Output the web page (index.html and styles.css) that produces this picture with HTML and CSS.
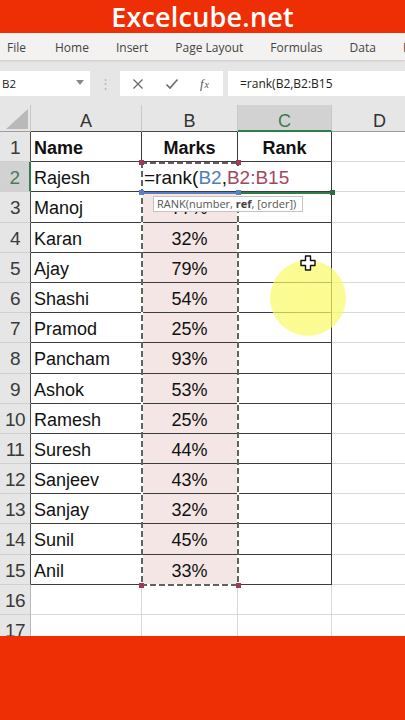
FILE: index.html
```html
<!DOCTYPE html>
<html>
<head>
<meta charset="utf-8">
<link rel="stylesheet" href="styles.css">
</head>
<body>
<div class="brand">Excelcube.net</div>
<nav class="tabs">
  <span>File</span><span>Home</span><span>Insert</span><span>Page Layout</span><span>Formulas</span><span>Data</span><span>F</span>
</nav>
<div class="fbar">
  <div class="namebox"><span>B2</span><svg class="caret" width="8" height="5" viewBox="0 0 8 5"><path d="M0 0H8L4 5Z" fill="#8a8a8a"/></svg></div>
  <span class="dots">⋮</span>
  <div class="fbtns">
    <svg width="12" height="12" viewBox="0 0 12 12"><path d="M1.5 1.5L10.5 10.5M10.5 1.5L1.5 10.5" stroke="#6a6a6a" stroke-width="1.3" fill="none"/></svg>
    <svg width="14" height="12" viewBox="0 0 14 12"><path d="M1.5 6.5L5 10L12.5 1.5" stroke="#6a6a6a" stroke-width="1.6" fill="none"/></svg>
    <span class="fx"><i>f</i><span>x</span></span>
  </div>
  <div class="formula">=rank(B2,B2:B15</div>
</div>
<div class="sheet">
  <div class="grid">
    <div class="corner"><svg width="22" height="20" viewBox="0 0 22 20"><path d="M22 0V20H0Z" fill="#b9b9b9"/></svg></div>
    <div class="ch top">A</div><div class="ch top">B</div><div class="ch sel">C</div><div class="ch">D</div>

    <div class="rh tb">1</div><div class="c t bold">Name</div><div class="c t bold ctr">Marks</div><div class="c t bold ctr">Rank</div><div class="c"></div>
    <div class="rh tb rsel">2</div><div class="c t">Rajesh</div><div class="c t edit"><span class="ftext">=rank(<span class="blue">B2</span>,<span class="red">B2:B15</span></span></div><div class="c t cact"></div><div class="c"></div>
    <div class="rh tb">3</div><div class="c t">Manoj</div><div class="c t m ctr">77%</div><div class="c t"></div><div class="c"></div>
    <div class="rh tb">4</div><div class="c t">Karan</div><div class="c t m ctr">32%</div><div class="c t"></div><div class="c"></div>
    <div class="rh tb">5</div><div class="c t">Ajay</div><div class="c t m ctr">79%</div><div class="c t"></div><div class="c"></div>
    <div class="rh tb">6</div><div class="c t">Shashi</div><div class="c t m ctr">54%</div><div class="c t"></div><div class="c"></div>
    <div class="rh tb">7</div><div class="c t">Pramod</div><div class="c t m ctr">25%</div><div class="c t"></div><div class="c"></div>
    <div class="rh tb">8</div><div class="c t">Pancham</div><div class="c t m ctr">93%</div><div class="c t"></div><div class="c"></div>
    <div class="rh tb">9</div><div class="c t">Ashok</div><div class="c t m ctr">53%</div><div class="c t"></div><div class="c"></div>
    <div class="rh tb">10</div><div class="c t">Ramesh</div><div class="c t m ctr">25%</div><div class="c t"></div><div class="c"></div>
    <div class="rh tb">11</div><div class="c t">Suresh</div><div class="c t m ctr">44%</div><div class="c t"></div><div class="c"></div>
    <div class="rh tb">12</div><div class="c t">Sanjeev</div><div class="c t m ctr">43%</div><div class="c t"></div><div class="c"></div>
    <div class="rh tb">13</div><div class="c t">Sanjay</div><div class="c t m ctr">32%</div><div class="c t"></div><div class="c"></div>
    <div class="rh tb">14</div><div class="c t">Sunil</div><div class="c t m ctr">45%</div><div class="c t"></div><div class="c"></div>
    <div class="rh tb">15</div><div class="c t">Anil</div><div class="c t m ctr">33%</div><div class="c t"></div><div class="c"></div>
    <div class="rh">16</div><div class="c"></div><div class="c"></div><div class="c"></div><div class="c"></div>
    <div class="rh">17</div><div class="c"></div><div class="c"></div><div class="c"></div><div class="c"></div>
  </div>

  <div class="ants"></div>
  <div class="bline"></div>
  <div class="gline"></div>
  <span class="hd mr hd1"></span><span class="hd mr hd2"></span><span class="hd mr hd3"></span><span class="hd mr hd4"></span>
  <span class="hd bl hd5"></span><span class="hd bl hd6"></span>
  <span class="hd gr hd7"></span>
  <div class="tip">RANK(number, <b>ref</b>, [order])</div>
  <div class="glow"></div>
  <svg class="cursor" width="16" height="16" viewBox="0 0 16 16"><path d="M5.5 1H10.5V5.5H15V10.5H10.5V15H5.5V10.5H1V5.5H5.5Z" fill="#fff" stroke="#111" stroke-width="1.4" stroke-linejoin="round"/></svg>
</div>
<div class="footer"></div>
</body>
</html>
```
FILE: styles.css
```css
* { box-sizing: border-box; }
html, body { margin: 0; padding: 0; }
body {
  width: 405px;
  height: 720px;
  overflow: hidden;
  background: #fff;
  font-family: "Liberation Sans", Arial, sans-serif;
}
.brand {
  height: 33px;
  background: #ee2f06;
  color: #fff;
  font-family: "Open Sans", sans-serif;
  font-weight: 600;
  font-size: 27px;
  line-height: 33px;
  text-align: center;
  letter-spacing: 0.2px;
}
.tabs {
  height: 27px;
  background: #f3f2f1;
  display: flex;
  align-items: center;
  gap: 27px;
  padding-left: 7px;
  padding-top: 1px;
  font-family: "Open Sans", sans-serif;
  font-size: 12px;
  color: #444;
  white-space: nowrap;
  box-shadow: 0 1px 2px rgba(0,0,0,0.12);
  position: relative;
}
.tabs span:nth-child(2) { margin-left: 2px; }
.fbar {
  height: 45px;
  background: #e6e6e6;
  display: flex;
  align-items: flex-start;
  padding-top: 11px;
}
.namebox {
  width: 90px;
  height: 25px;
  background: #fff;
  display: flex;
  align-items: center;
  justify-content: space-between;
  padding: 0 6px 0 2px;
  font-family: "Open Sans", sans-serif;
  font-size: 11.5px;
  color: #222;
}
.caret { margin-top: -2px; }
.dots {
  width: 30px;
  text-align: center;
  color: #b8b8b8;
  font-size: 13px;
  line-height: 25px;
}
.fbtns {
  width: 103px;
  height: 25px;
  background: #fff;
  display: flex;
  align-items: center;
  justify-content: space-between;
  padding: 0 14px 0 12px;
}
.fx {
  font-family: "Liberation Serif", serif;
  color: #5a5a5a;
  font-size: 13px;
}
.fx span { font-size: 10px; font-style: italic; margin-left: 1px; }
.formula {
  margin-left: 5px;
  flex: 1;
  height: 25px;
  background: #fff;
  padding-left: 12px;
  font-family: "Open Sans", sans-serif;
  font-size: 12px;
  line-height: 25px;
  color: #222;
}
.sheet {
  position: relative;
  height: 531px;
  overflow: hidden;
  background: #fff;
}
.grid {
  display: grid;
  grid-template-columns: 31px 111px 96px 94px 96px;
  grid-template-rows: 27px repeat(17, 30.2px);
  font-size: 18px;
  color: #111;
}
.corner {
  background: #e6e6e6;
  border-right: 1px solid #c8c8c8;
  border-bottom: 1px solid #9d9d9d;
  display: flex;
  align-items: flex-end;
  justify-content: flex-end;
  padding: 0 2px 2px 0;
}
.ch {
  background: #e6e6e6;
  border-right: 1px solid #c8c8c8;
  border-bottom: 1px solid #9d9d9d;
  text-align: center;
  padding-top: 3px;
  line-height: 26px;
  color: #333;
  font-size: 18px;
}
.ch.top { border-bottom-color: #4a4a4a; }
.ch.sel {
  background: #d2d2d2;
  color: #3e7b52;
  border-bottom: 2px solid #2f7d4a;
}
.rh {
  background: #e6e6e6;
  border-right: 1px solid #b8b8b8;
  border-bottom: 1px solid #d0d0d0;
  text-align: center;
  padding-top: 2px;
  line-height: 28px;
  font-size: 19px;
  color: #3a3a3a;
  letter-spacing: -0.5px;
}
.rh.tb { border-right-color: #4a4a4a; }
.rh.rsel {
  background: #d2d2d2;
  color: #4a7a5a;
  border-right: 2px solid #2f7d4a;
}
.c {
  border-right: 1px solid #d9d9d9;
  border-bottom: 1px solid #d9d9d9;
  padding-left: 3px;
  padding-top: 3px;
  line-height: 27px;
  white-space: nowrap;
}
.c.t { border-color: #3c3c3c; }
.ctr { text-align: center; padding-left: 0; }
.bold { font-weight: bold; }
.m { background: #f3e6e4; }
.edit {
  position: relative;
  z-index: 4;
  overflow: visible;
  padding-left: 2px;
}
.ftext {
  display: inline-block;
  font-size: 19px;
  line-height: 24px;
  background: #fff;
}
.blue { color: #4f7cc0; }
.red { color: #a4475c; }
.ants {
  position: absolute;
  left: 141px;
  top: 57px;
  width: 98px;
  height: 423.8px;
  background:
    repeating-linear-gradient(to bottom, #5c665c 0 6px, #fff 6px 9px) left top / 2px 100% no-repeat,
    repeating-linear-gradient(to bottom, #5c665c 0 6px, #fff 6px 9px) right top / 2px 100% no-repeat,
    repeating-linear-gradient(to right, #6a5a60 0 6px, #fff 6px 9px) left top / 100% 2px no-repeat,
    repeating-linear-gradient(to right, #5c665c 0 6px, #fff 6px 9px) left bottom / 100% 2px no-repeat;
  z-index: 3;
}
.bline {
  position: absolute;
  left: 142px;
  top: 87px;
  width: 97px;
  height: 2px;
  background: #5a80bf;
  z-index: 5;
}
.gline {
  position: absolute;
  left: 240px;
  top: 87px;
  width: 92px;
  height: 2px;
  background: #2f7d4a;
  z-index: 5;
}
.hd {
  position: absolute;
  width: 5px;
  height: 5px;
  z-index: 5;
}
.mr { background: #9e3a58; }
.bl { background: #5a80bf; }
.gr { background: #2f6b42; }
.hd1 { left: 139px; top: 55px; }
.hd2 { left: 236px; top: 55px; }
.hd3 { left: 139px; top: 478px; }
.hd4 { left: 236px; top: 478px; }
.hd5 { left: 139px; top: 85px; }
.hd6 { left: 236px; top: 85px; }
.hd7 { left: 330px; top: 85px; }
.tip {
  position: absolute;
  left: 153px;
  top: 91px;
  width: 150px;
  height: 16px;
  background: #fff;
  border: 1px solid #c4c4c4;
  font-family: "Open Sans", sans-serif;
  font-size: 11px;
  line-height: 14px;
  color: #555;
  padding-left: 3px;
  white-space: nowrap;
  z-index: 6;
}
.tip b { font-weight: 700; color: #444; }
.glow {
  position: absolute;
  left: 270px;
  top: 155px;
  width: 76px;
  height: 76px;
  border-radius: 50%;
  background: radial-gradient(circle, rgba(250,250,100,0.72) 0%, rgba(250,250,100,0.68) 85%, rgba(250,250,100,0.35) 100%);
  z-index: 6;
}
.cursor {
  position: absolute;
  left: 300px;
  top: 150px;
  z-index: 7;
}
.footer {
  height: 84px;
  background: #ee2f06;
}
```
